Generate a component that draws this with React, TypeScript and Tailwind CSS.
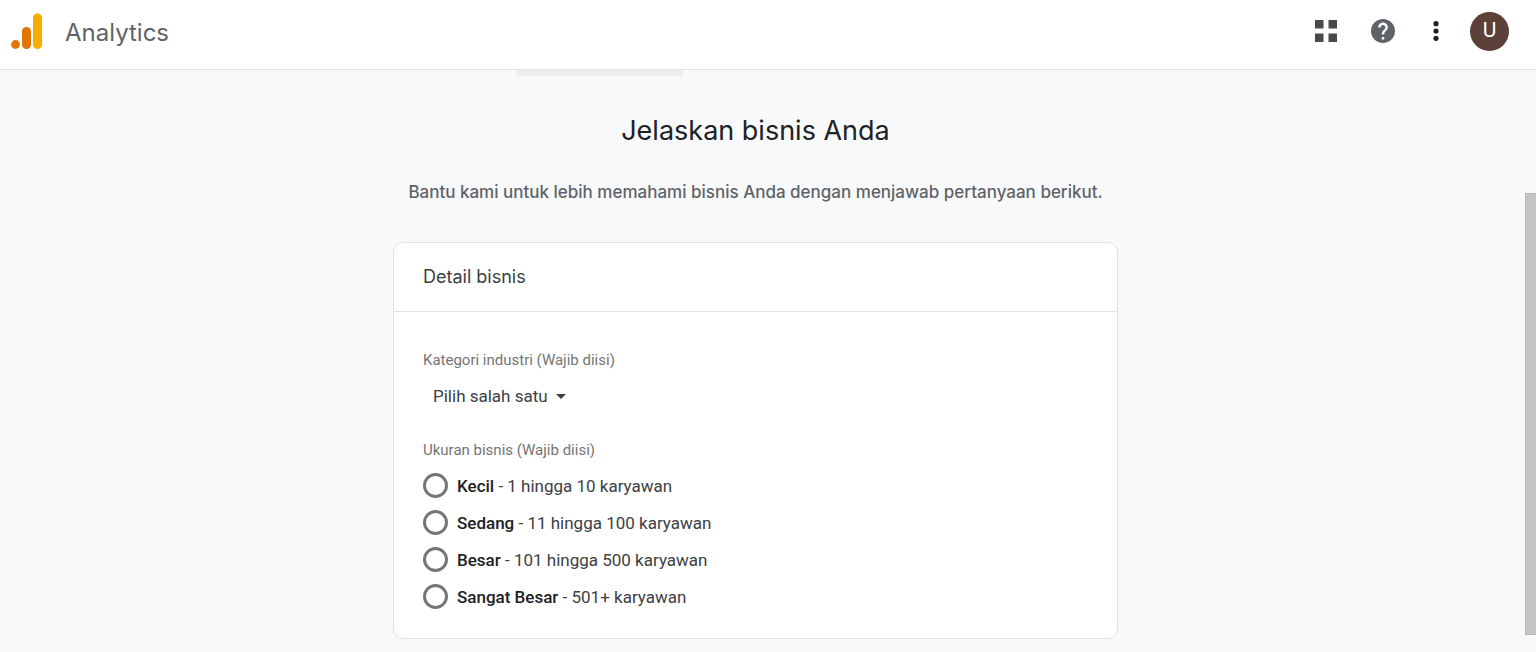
type BusinessSize = {
  value: string;
  name: string;
  range: string;
};

const SIZES: BusinessSize[] = [
  { value: "small", name: "Kecil", range: "1 hingga 10 karyawan" },
  { value: "medium", name: "Sedang", range: "11 hingga 100 karyawan" },
  { value: "large", name: "Besar", range: "101 hingga 500 karyawan" },
  { value: "xlarge", name: "Sangat Besar", range: "501+ karyawan" },
];

const INDUSTRIES = ["Pilih salah satu"];

function AnalyticsLogo() {
  return (
    <svg viewBox="0 0 32 36" className="h-9 w-8" aria-hidden="true">
      <circle cx="4.5" cy="31.5" r="4.4" fill="#e37400" />
      <rect x="11" y="14" width="9" height="22" rx="4.5" fill="#e37400" />
      <rect x="22" y="0.5" width="9" height="35.5" rx="4.5" fill="#f9ab00" />
    </svg>
  );
}

function AppsIcon() {
  return (
    <svg viewBox="0 0 24 24" className="size-6" fill="#4a4a4a" aria-hidden="true">
      <path d="M1 1h8.5v8.5H1zM14.5 1H23v8.5h-8.5zM1 14.5h8.5V23H1zM14.5 14.5H23V23h-8.5z" />
    </svg>
  );
}

function HelpIcon() {
  return (
    <svg viewBox="2 2 20 20" className="size-6" fill="#5f6368" aria-hidden="true">
      <path d="M12 2C6.48 2 2 6.48 2 12s4.48 10 10 10 10-4.48 10-10S17.52 2 12 2zm1 17h-2v-2h2v2zm2.07-7.75l-.9.92C13.45 12.9 13 13.5 13 15h-2v-.5c0-1.1.45-2.1 1.17-2.83l1.24-1.26c.37-.36.59-.86.59-1.41 0-1.1-.9-2-2-2s-2 .9-2 2H8c0-2.21 1.79-4 4-4s4 1.79 4 4c0 .88-.36 1.68-.93 2.25z" />
    </svg>
  );
}

function MoreIcon() {
  return (
    <svg viewBox="0 0 6 20" className="h-5 w-1.5" fill="#202124" aria-hidden="true">
      <circle cx="3" cy="2.7" r="2.6" />
      <circle cx="3" cy="10" r="2.6" />
      <circle cx="3" cy="17.3" r="2.6" />
    </svg>
  );
}

function Header() {
  return (
    <header className="flex h-[70px] items-start justify-between border-b border-[#dfe1e5] bg-white pt-[11px] pr-[27px] pl-[11px]">
      <div className="flex h-10 items-center gap-[22px]">
        <AnalyticsLogo />
        <span className="pt-1 font-['Inter',sans-serif] text-[24px] text-[#5f6368]">Analytics</span>
      </div>
      <div className="flex h-10 items-center">
        <button type="button" aria-label="Aplikasi" className="mr-[33px]">
          <AppsIcon />
        </button>
        <button type="button" aria-label="Bantuan" className="mr-[38px]">
          <HelpIcon />
        </button>
        <button type="button" aria-label="Lainnya" className="mr-[31px]">
          <MoreIcon />
        </button>
        <button
          type="button"
          className="flex size-[39px] items-center justify-center rounded-full bg-[#5d4037] text-[21px] text-white"
        >
          U
        </button>
      </div>
    </header>
  );
}

function IndustryField() {
  return (
    <div>
      <label htmlFor="industry" className="block text-[15px] leading-5 text-[#757575]">
        Kategori industri (Wajib diisi)
      </label>
      <div className="mt-[14px] flex items-center pl-[10px]">
        <select
          id="industry"
          className="field-sizing-content appearance-none bg-transparent pr-5 text-[17px] leading-6 text-[#3c4043]"
        >
          {INDUSTRIES.map((name) => (
            <option key={name}>{name}</option>
          ))}
        </select>
        <svg viewBox="0 0 10 5" className="pointer-events-none -ml-3 h-[5px] w-[10px]" fill="#3c4043" aria-hidden="true">
          <path d="M0 0h10L5 5z" />
        </svg>
      </div>
    </div>
  );
}

function SizeField() {
  return (
    <fieldset className="mt-8">
      <legend className="text-[15px] leading-5 text-[#757575]">Ukuran bisnis (Wajib diisi)</legend>
      <div className="mt-[13px] flex flex-col gap-3">
        {SIZES.map(({ value, name, range }) => (
          <label key={value} className="flex items-center gap-[9px] text-[17px] leading-6 text-[#3c4043]">
            <input
              type="radio"
              name="size"
              value={value}
              className="size-[25px] appearance-none rounded-full border-3 border-[#757575] checked:border-8 checked:border-[#1a73e8]"
            />
            <span>
              <b className="font-medium text-[#202124]">{name}</b> - {range}
            </span>
          </label>
        ))}
      </div>
    </fieldset>
  );
}

export default function App() {
  return (
    <div className="relative min-h-screen bg-[#f8f9fb] font-['Roboto',sans-serif]">
      <Header />
      <main className="pr-[25px] pb-3">
        <div className="mx-auto max-w-[725px]">
          <div className="ml-[123px] h-1.5 w-[167px] bg-[#eeeeef]" />
          <h1 className="mt-[35px] text-center font-['Inter',sans-serif] text-[27px] leading-10 text-[#202124]">
            Jelaskan bisnis Anda
          </h1>
          <p className="mt-[29px] text-center font-['Inter',sans-serif] text-[17px] leading-6 font-medium text-[#5f6368]">
            Bantu kami untuk lebih memahami bisnis Anda dengan menjawab pertanyaan berikut.
          </p>
          <section className="mt-[38px] rounded-[10px] border border-[#e0e2e6] bg-white">
            <h2 className="border-b border-[#e0e2e6] px-[29px] py-5 font-['Inter',sans-serif] text-[18px] leading-7 text-[#3c4043]">
              Detail bisnis
            </h2>
            <form className="px-[29px] pt-[38px] pb-[29px]">
              <IndustryField />
              <SizeField />
            </form>
          </section>
        </div>
      </main>
      {/* scroll thumb */}
      <div className="absolute top-[193px] right-0 bottom-[17px] w-[11px] border border-r-0 border-[#b8b8b8] bg-[#c4c5c6]" />
    </div>
  );
}
